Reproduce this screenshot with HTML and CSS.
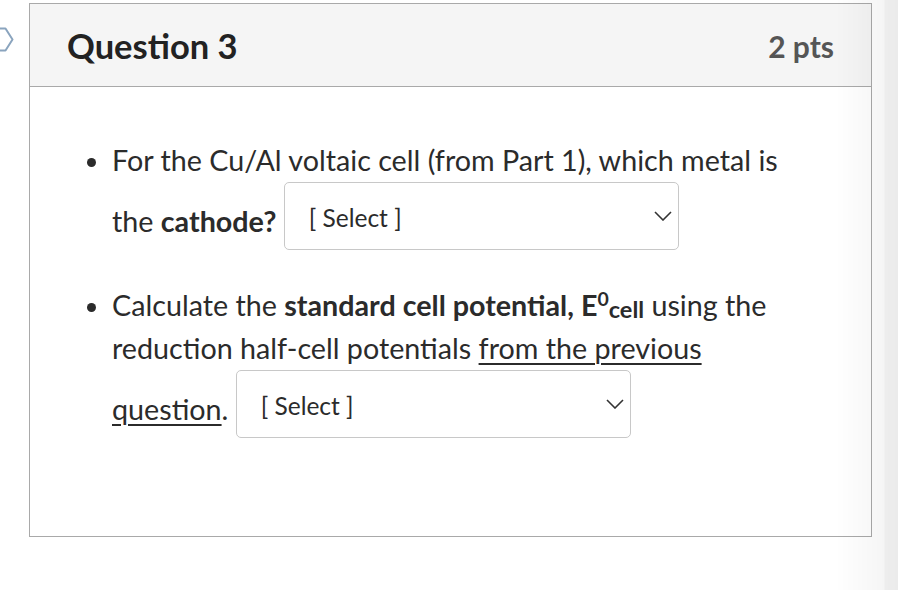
FILE: index.html
```html
<!DOCTYPE html>
<html lang="en">
<head>
<meta charset="utf-8">
<title>Question 3</title>
<link rel="stylesheet" href="styles.css">
</head>
<body>
<div class="page">
  <div class="gutter">
    <svg class="flag" width="16" height="26" viewBox="0 0 16 26" aria-hidden="true">
      <path d="M-2 1.5H5.5L12.5 12.5L5.5 23.5H-2" fill="none" stroke="#8aa4be" stroke-width="2" stroke-linejoin="round"/>
    </svg>
  </div>
  <section class="card">
    <header class="card-head">
      <h2 class="q-title">Question 3</h2>
      <span class="pts">2 pts</span>
    </header>
    <div class="card-body">
      <ul class="items">
        <li>For the Cu/Al voltaic cell (from Part 1), which metal is the <strong>cathode?</strong> <span class="select"><svg class="chev" width="18" height="10" viewBox="0 0 18 10" aria-hidden="true"><path d="M1 1L9 9L17 1" fill="none" stroke="#333" stroke-width="1.6"/></svg><span class="select-text">[ Select ]</span></span></li>
        <li>Calculate the <strong>standard cell potential, E<sup class="sup">0</sup><sub class="sub">cell</sub></strong> using the reduction half-cell potentials <u class="ref">from the previous question</u>. <span class="select"><svg class="chev" width="18" height="10" viewBox="0 0 18 10" aria-hidden="true"><path d="M1 1L9 9L17 1" fill="none" stroke="#333" stroke-width="1.6"/></svg><span class="select-text">[ Select ]</span></span></li>
      </ul>
    </div>
  </section>
</div>
<div class="edge-shade"></div>
</body>
</html>
```
FILE: styles.css
```css
html, body {
  margin: 0;
  padding: 0;
  background: #ffffff;
}

body {
  font-family: Lato, "Open Sans", "Liberation Sans", sans-serif;
  color: #2b2b2b;
  overflow: hidden;
}

.page {
  display: flex;
  align-items: flex-start;
  padding-top: 3px;
}

.gutter {
  width: 29px;
  flex: 0 0 29px;
}

.flag {
  display: block;
  margin-top: 24px;
  margin-left: 0;
}

.card {
  width: 843px;
  height: 534px;
  box-sizing: border-box;
  border: 1px solid #a9a9a9;
  background: #ffffff;
}

.card-head {
  height: 83px;
  box-sizing: border-box;
  background: #f5f5f5;
  border-bottom: 1px solid #a9a9a9;
  display: flex;
  align-items: center;
  justify-content: space-between;
  padding: 2px 37px 0 37px;
}

.q-title {
  margin: 0;
  font-size: 34.5px;
  font-weight: 700;
  color: #222222;
  line-height: 1.2;
}

.pts {
  font-size: 30px;
  font-weight: 700;
  color: #555555;
  line-height: 1.2;
}

.card-body {
  padding: 52px 70px 0 38px;
}

.items {
  margin: 0;
  padding-left: 44px;
  font-size: 28.7px;
  line-height: 1.5;
}

.items li + li {
  margin-top: 33.5px;
}

.items strong {
  font-weight: 700;
}

.sup {
  font-size: 19.5px;
  line-height: 1;
  vertical-align: 10px;
}

.sub {
  font-size: 23.5px;
  vertical-align: -2px;
}

.ref {
  text-decoration: underline;
  text-decoration-thickness: 1.5px;
  text-underline-offset: 4px;
}

.select {
  display: inline-block;
  box-sizing: border-box;
  width: 395px;
  height: 68px;
  padding: 0 6px 0 24px;
  border: 1px solid #c8c8c8;
  border-radius: 5px;
  background: #ffffff;
  vertical-align: 5px;
  line-height: 66px;
}

.select-text {
  font-size: 24.5px;
  color: #2b2b2b;
}

.chev {
  display: block;
  float: right;
  margin-top: 28px;
}

.edge-shade {
  position: fixed;
  top: 0;
  right: 0;
  width: 62px;
  height: 100%;
  pointer-events: none;
  background: linear-gradient(to right,
    rgba(0, 0, 0, 0) 0,
    rgba(0, 0, 0, 0.04) 48px,
    rgba(0, 0, 0, 0.07) 49px,
    rgba(0, 0, 0, 0.08) 100%);
}
```
